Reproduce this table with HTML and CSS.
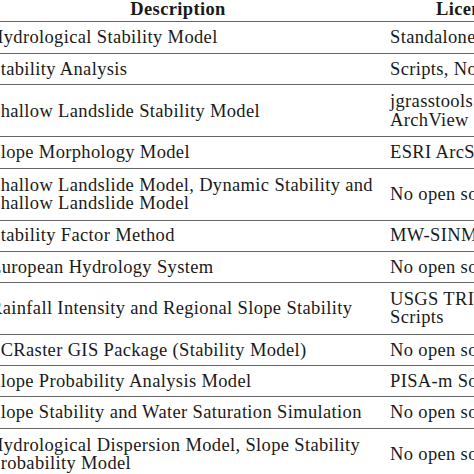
FILE: index.html
```html
<!DOCTYPE html>
<html>
<head>
<meta charset="utf-8">
<link rel="stylesheet" href="styles.css">
</head>
<body>
<div class="page">
  <div class="table">
    <div class="row head">
      <div class="cell desc">Description</div>
      <div class="cell lic">License</div>
    </div>
    <div class="row">
      <div class="cell">Hydrological Stability Model</div>
      <div class="cell">Standalone application</div>
    </div>
    <div class="row">
      <div class="cell">Stability Analysis</div>
      <div class="cell">Scripts, No open source</div>
    </div>
    <div class="row tall">
      <div class="cell">Shallow Landslide Stability Model</div>
      <div class="cell">jgrasstools (uDig)<br>ArchView (ESRI)</div>
    </div>
    <div class="row">
      <div class="cell">Slope Morphology Model</div>
      <div class="cell">ESRI ArcScripts</div>
    </div>
    <div class="row tall">
      <div class="cell">Shallow Landslide Model, Dynamic Stability and<br>Shallow Landslide Model</div>
      <div class="cell">No open source</div>
    </div>
    <div class="row">
      <div class="cell">Stability Factor Method</div>
      <div class="cell">MW-SINMAP</div>
    </div>
    <div class="row">
      <div class="cell">European Hydrology System</div>
      <div class="cell">No open source</div>
    </div>
    <div class="row tall">
      <div class="cell">Rainfall Intensity and Regional Slope Stability</div>
      <div class="cell">USGS TRIGRS<br>Scripts</div>
    </div>
    <div class="row">
      <div class="cell">PCRaster GIS Package (Stability Model)</div>
      <div class="cell">No open source</div>
    </div>
    <div class="row">
      <div class="cell">Slope Probability Analysis Model</div>
      <div class="cell">PISA-m Software</div>
    </div>
    <div class="row">
      <div class="cell">Slope Stability and Water Saturation Simulation</div>
      <div class="cell">No open source</div>
    </div>
    <div class="row tall">
      <div class="cell">Hydrological Dispersion Model, Slope Stability<br>Probability Model</div>
      <div class="cell">No open source</div>
    </div>
  </div>
</div>
</body>
</html>
```
FILE: styles.css
```css
html, body {
  margin: 0;
  padding: 0;
  background: #ffffff;
}
.page {
  width: 474px;
  height: 474px;
  overflow: hidden;
}
.table {
  margin-left: -10px;
  width: 560px;
  font-family: "Liberation Serif", "Times New Roman", serif;
  font-size: 18.5px;
  letter-spacing: 0.35px;
  line-height: 18.5px;
  color: #1a1a1a;
}
.row {
  display: grid;
  grid-template-columns: 376px 154px;
  column-gap: 24px;
  align-items: center;
  height: 31.2px;
  box-sizing: border-box;
  border-top: 1px solid #666666;
}
.row.tall {
  height: 52px;
}
.row.head {
  border-top: none;
  border-bottom: 1px solid #666666;
  height: 22px;
  align-items: start;
  font-weight: bold;
}
.row.head + .row {
  border-top: none;
}
.cell {
  white-space: nowrap;
}
.head .cell {
  text-align: center;
}
```
